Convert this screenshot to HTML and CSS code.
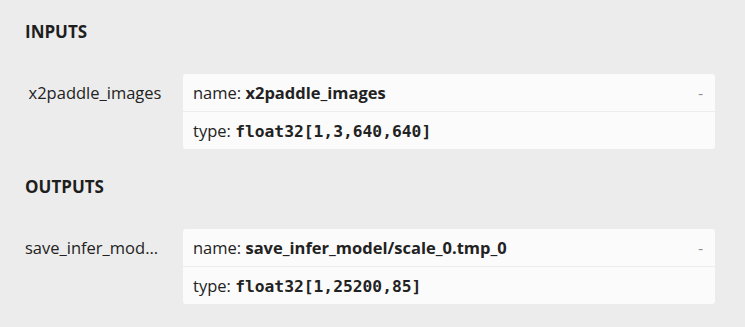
FILE: index.html
```html
<!doctype html>
<html lang="en">
  <head>
    <meta charset="UTF-8" />
    <title>Model Properties</title>
    <link rel="stylesheet" href="styles.css">
  </head>
  <body>
    <div class="section">
      <div class="section-title">INPUTS</div>
      <div class="item">
        <div class="item-name">x2paddle_images</div>
        <div class="item-value">
          <div class="row">
            <span>name: <b>x2paddle_images</b></span>
            <span class="expander">-</span>
          </div>
          <div class="row">
            <span>type: <code>float32[1,3,640,640]</code></span>
          </div>
        </div>
      </div>
    </div>

    <div class="section">
      <div class="section-title">OUTPUTS</div>
      <div class="item">
        <div class="item-name">save_infer_model/scale_0.tmp_0</div>
        <div class="item-value">
          <div class="row">
            <span>name: <b>save_infer_model/scale_0.tmp_0</b></span>
            <span class="expander">-</span>
          </div>
          <div class="row">
            <span>type: <code>float32[1,25200,85]</code></span>
          </div>
        </div>
      </div>
    </div>
  </body>
</html>
```

FILE: styles.css
```css
* {
  margin: 0;
  padding: 0;
  box-sizing: border-box;
}

body {
  font-family: "Open Sans", "Noto Sans", sans-serif;
  font-size: 16.5px;
  color: #222;
  background: #ececec;
  padding: 21px 30px 0 25px;
}

.section {
  margin-bottom: 27px;
}

.section-title {
  font-size: 17px;
  font-weight: 700;
  line-height: 22px;
  margin-bottom: 31px;
  color: #1e1e1e;
}

.item {
  display: flex;
  gap: 18px;
}

.item-name {
  width: 140px;
  flex-shrink: 0;
  line-height: 37px;
  text-align: center;
  white-space: nowrap;
  overflow: hidden;
  text-overflow: ellipsis;
}

.item-value {
  flex: 1;
  background: #fbfbfb;
  border-radius: 3px;
}

.row {
  display: flex;
  justify-content: space-between;
  align-items: center;
  height: 37px;
  padding: 0 12px 0 10px;
}

.row + .row {
  height: 38px;
  border-top: 1px solid #ececec;
}

.row b {
  font-weight: 700;
}

.row code {
  font-family: "DejaVu Sans Mono", monospace;
  font-size: 16.3px;
  font-weight: 700;
}

.expander {
  color: #8a8a8a;
  font-size: 15px;
}
```
